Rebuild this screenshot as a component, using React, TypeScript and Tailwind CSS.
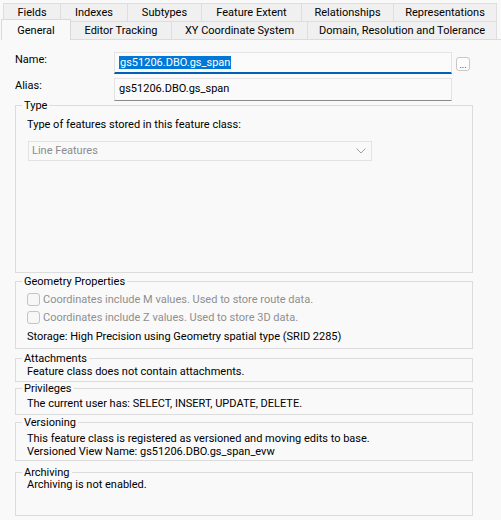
import React from 'react';

const font = { fontFamily: '"Segoe UI", Roboto, "Noto Sans", sans-serif' };

function Tab({ label, w, active }: { label: string; w: number; active?: boolean }) {
  return (
    <div
      style={{ width: w }}
      className={
        active
          ? 'relative z-10 -mt-[2px] h-[21px] bg-[#f9f9f9] border border-b-0 border-[#d9d9d9] flex items-center justify-center pt-[2px] text-black'
          : 'h-full bg-[#f0f0f0] border border-b-0 border-l-0 first:border-l border-[#dedede] flex items-center justify-center pt-[2px] text-black'
      }>
      {label}
    </div>
  );
}

function Group({ title, h, className, children }: { title: string; h: number; className?: string; children?: React.ReactNode }) {
  return (
    <fieldset
      style={{ height: h }}
      className={`w-[458px] ml-[15px] border border-[#dcdcdc] ${className ?? ''}`}>
      <legend className="ml-[6px] px-[2px] leading-[14px] text-black">
        <span className="relative top-[1px]">{title}</span>
      </legend>
      {children}
    </fieldset>
  );
}

function Check({ label }: { label: string }) {
  return (
    <div className="flex items-center h-[13px] pl-[11px]">
      <span className="w-[13px] h-[13px] rounded-[3px] border border-[#c4c4c4] bg-[#f7f7f7]" />
      <span className="ml-[3px] text-[#8f8f8f] leading-[13px] -mt-[1px]">{label}</span>
    </div>
  );
}

export default function App() {
  return (
    <div style={font} className="w-[501px] h-[520px] bg-[#f9f9f9] text-[11px] text-black overflow-hidden">
      {/* Tab strip */}
      <div className="flex ml-[3px] pt-[3px] h-[21px]">
        <Tab label="Fields" w={58} />
        <Tab label="Indexes" w={67} />
        <Tab label="Subtypes" w={74} />
        <Tab label="Feature Extent" w={100} />
        <Tab label="Relationships" w={92} />
        <Tab label="Representations" w={103} />
      </div>
      <div className="flex ml-[1px] h-[19px] border-b border-[#dcdcdc]">
        <Tab label="General" w={70} active />
        <Tab label="Editor Tracking" w={101} />
        <Tab label="XY Coordinate System" w={136} />
        <Tab label="Domain, Resolution and Tolerance" w={189} />
      </div>

      {/* Name */}
      <div className="flex items-start mt-[12px] h-[22px]">
        <span className="w-[99px] ml-[15px] mt-0">Name:</span>
        <div className="w-[338px] h-[22px] bg-[#fbfbfb] border border-[#e3e3e3] border-b-2 border-b-[#005fb8] flex items-center pl-[4px]">
          <span className="bg-[#0078d7] text-white leading-[13px] px-[1px]">gs51206.DBO.gs_span</span>
        </div>
        <div className="ml-[4px] mt-[5px] w-[14px] h-[14px] rounded-[3px] border border-[#c8c8c8] bg-[#fdfdfd] flex items-end justify-center text-[9px] leading-[9px] text-black">
          ...
        </div>
      </div>

      {/* Alias */}
      <div className="flex items-start mt-[4px] h-[23px]">
        <span className="w-[99px] ml-[15px] mt-0">Alias:</span>
        <div className="w-[338px] h-[23px] bg-[#fafafa] border border-[#e3e3e3] border-b-[#8a8a8a] flex items-center pl-[4px]">
          gs51206.DBO.gs_span
        </div>
      </div>

      {/* Type */}
      <Group title="Type" h={175} className="-mt-[3px]">
        <div className="pl-[11px] mt-[6px] leading-[13px]">Type of features stored in this feature class:</div>
        <div className="ml-[12px] mt-[10px] w-[344px] h-[20px] border border-[#e3e3e3] bg-[#f9f9f9] flex items-center justify-between pl-[3px] pr-[5px] text-[#8c8c8c]">
          <span>Line Features</span>
          <svg width="10" height="6" viewBox="0 0 10 6" fill="none" stroke="#a0a0a0" strokeWidth="1">
            <path d="M0.5 0.5 L5 5 L9.5 0.5" />
          </svg>
        </div>
      </Group>

      {/* Geometry */}
      <Group title="Geometry Properties" h={75} className="mt-[1px]">
        <div className="mt-[5px] flex flex-col gap-[5px]">
          <Check label="Coordinates include M values. Used to store route data." />
          <Check label="Coordinates include Z values. Used to store 3D data." />
        </div>
        <div className="pl-[11px] mt-[6px] leading-[13px]">Storage: High Precision using Geometry spatial type (SRID 2285)</div>
      </Group>

      <Group title="Attachments" h={31} className="mt-[2px]">
        <div className="pl-[11px] mt-0 leading-[13px]">Feature class does not contain attachments.</div>
      </Group>

      <Group title="Privileges" h={34} className="-mt-[1px]">
        <div className="pl-[11px] mt-[2px] leading-[13px]">The current user has: SELECT, INSERT, UPDATE, DELETE.</div>
      </Group>

      <Group title="Versioning" h={46} className="mt-0">
        <div className="pl-[11px] mt-[3px] leading-[13px]">
          This feature class is registered as versioned and moving edits to base.
          <br />
          Versioned View Name: gs51206.DBO.gs_span_evw
        </div>
      </Group>

      <Group title="Archiving" h={51} className="mt-[4px]">
        <div className="pl-[11px] -mt-[1px] leading-[13px]">Archiving is not enabled.</div>
      </Group>
    </div>
  );
}
